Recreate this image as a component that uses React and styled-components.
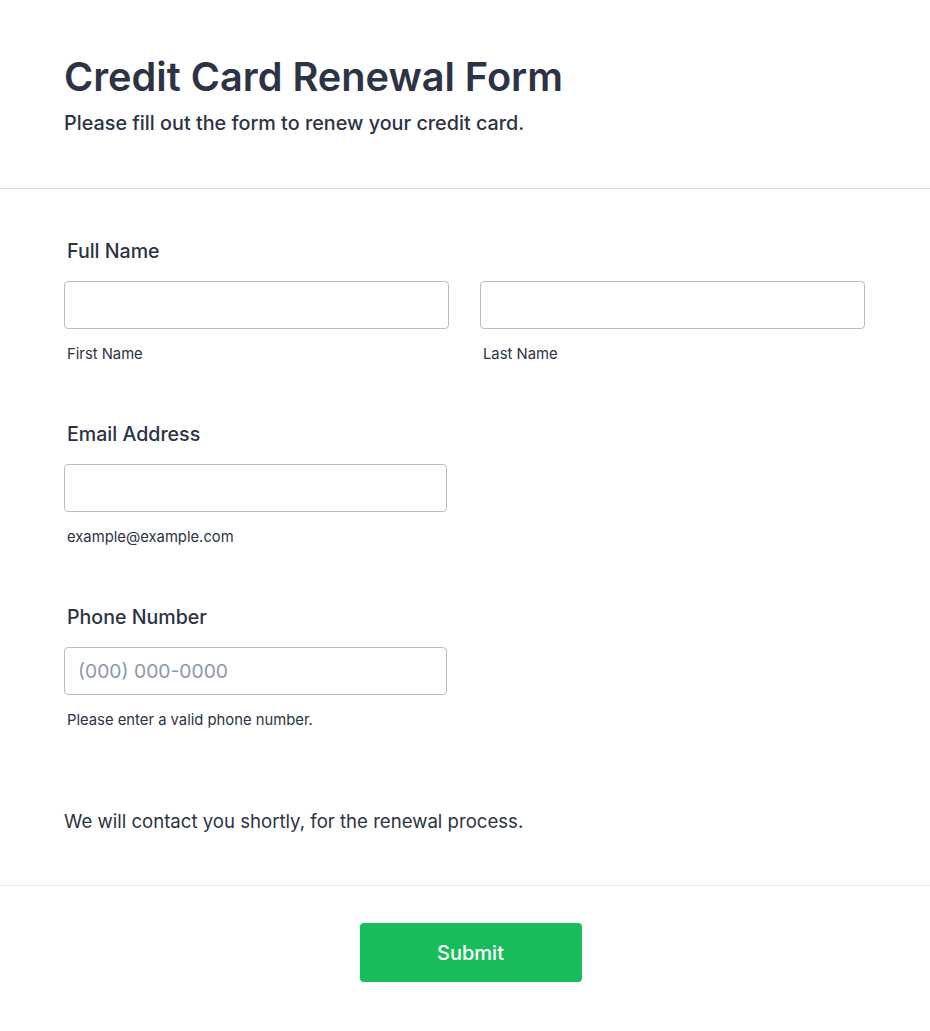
import React from 'react';
import styled, { createGlobalStyle } from 'styled-components';

const GlobalStyle = createGlobalStyle`
	html, body {
		margin: 0;
		padding: 0;
		background: #fff;
	}
	body {
		font-family: Inter, "Noto Sans", sans-serif;
		color: #2c3345;
	}
`;

const Page = styled.div`
	width: 930px;
	min-height: 1031px;
	background: #fff;
`;

const Header = styled.header`
	padding: 53px 64px 50px;
	border-bottom: 1px solid #d8dde6;

	h1 {
		margin: 0 0 7px;
		font-size: 39.7px;
		line-height: 48px;
		font-weight: 600;
	}
	p {
		margin: 0;
		font-size: 19.8px;
		line-height: 30px;
		font-weight: 500;
	}
`;

const Body = styled.div`
	padding: 47px 64px 50px;
	display: flex;
	flex-direction: column;
	gap: 54px;
`;

const Field = styled.div`
	display: flex;
	flex-direction: column;
`;

const Label = styled.div`
	padding-left: 3px;
	font-size: 19.6px;
	line-height: 30px;
	font-weight: 500;
	margin-bottom: 15px;
`;

const Row = styled.div`
	display: grid;
	grid-template-columns: ${p => p.$cols || '385px'};
	column-gap: 31px;
`;

const Cell = styled.div`
	display: flex;
	flex-direction: column;
`;

const Input = styled.input`
	box-sizing: border-box;
	width: 100%;
	height: 48px;
	border: 1px solid #b8bdc9;
	border-radius: 4px;
	padding: 0 13px;
	font-family: inherit;
	font-size: 19.3px;
	color: #2c3345;
	background: #fff;
	outline: none;

	&::placeholder {
		color: #8c97ae;
	}
`;

const Sub = styled.div`
	padding-left: 3px;
	margin-top: 14px;
	font-size: 14.8px;
	line-height: 22px;
	color: #2c3345;
`;

const Note = styled.p`
	margin: 22px 0 0;
	font-size: 18.6px;
	line-height: 28px;
`;

const Footer = styled.footer`
	border-top: 1px solid #e6e9ef;
	padding: 37px 0 50px;
	display: flex;
	justify-content: center;
`;

const SubmitButton = styled.button`
	width: 222px;
	height: 59px;
	border: none;
	border-radius: 4px;
	background: #18bd5b;
	color: #fff;
	font-family: inherit;
	font-size: 20px;
	font-weight: 500;
	cursor: pointer;
	margin-left: 11px;
`;

const App = () => {
	return (
		<Page>
			<GlobalStyle />
			<Header>
				<h1>Credit Card Renewal Form</h1>
				<p>Please fill out the form to renew your credit card.</p>
			</Header>
			<Body>
				<Field>
					<Label>Full Name</Label>
					<Row $cols="385px 385px">
						<Cell>
							<Input type="text" />
							<Sub>First Name</Sub>
						</Cell>
						<Cell>
							<Input type="text" />
							<Sub>Last Name</Sub>
						</Cell>
					</Row>
				</Field>
				<Field>
					<Label>Email Address</Label>
					<Row $cols="383px">
						<Cell>
							<Input type="email" />
							<Sub>example@example.com</Sub>
						</Cell>
					</Row>
				</Field>
				<Field>
					<Label>Phone Number</Label>
					<Row $cols="383px">
						<Cell>
							<Input type="tel" placeholder="(000) 000-0000" />
							<Sub>Please enter a valid phone number.</Sub>
						</Cell>
					</Row>
				</Field>
				<Note>We will contact you shortly, for the renewal process.</Note>
			</Body>
			<Footer>
				<SubmitButton type="button">Submit</SubmitButton>
			</Footer>
		</Page>
	);
}

export default App;
